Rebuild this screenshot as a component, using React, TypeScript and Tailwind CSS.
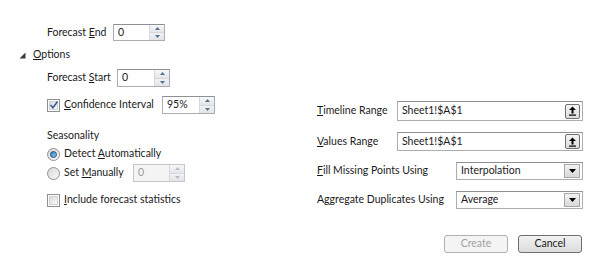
import React from 'react';

// Petits triangles du spinner
const SpinBox: React.FC<{ value: string; width: string; disabled?: boolean }> = ({ value, width, disabled }) => (
  <div
    className={`flex h-full shrink-0 items-stretch border ${
      disabled ? 'border-[#c5c7cb] bg-[#f4f4f4] text-[#9a9a9a]' : 'border-[#abadb3] border-t-[#8e9096] bg-white'
    } ${width}`}
  >
    <div className="flex flex-1 items-center pl-[4px]">{value}</div>
    <div className="flex w-[15px] flex-col border-l border-[#d6d8db]">
      <div className="flex flex-1 items-center justify-center border-b border-[#d6d8db] bg-gradient-to-b from-[#f6f7f8] to-[#e4e6e9]">
        <svg width="5" height="3" viewBox="0 0 5 3">
          <polygon points="2.5,0 5,3 0,3" fill={disabled ? '#b5bcc6' : '#58708f'} />
        </svg>
      </div>
      <div className="flex flex-1 items-center justify-center bg-gradient-to-b from-[#f1f2f4] to-[#e2e4e7]">
        <svg width="5" height="3" viewBox="0 0 5 3">
          <polygon points="0,0 5,0 2.5,3" fill={disabled ? '#b5bcc6' : '#58708f'} />
        </svg>
      </div>
    </div>
  </div>
);

const CheckBox: React.FC<{ checked?: boolean }> = ({ checked }) => (
  <div className="flex h-[13px] w-[13px] shrink-0 items-center justify-center border border-[#8f8f8f] bg-white">
    <div className="relative h-[9px] w-[9px] border border-[#d2d2d2] bg-gradient-to-br from-[#dadada] to-[#fbfbfb]">
      {checked && (
        <svg className="absolute left-[-1px] top-[-2px]" width="10" height="10" viewBox="0 0 10 10">
          <path d="M1.5 5 L4 7.8 L8.5 1.5" fill="none" stroke="#3c5a98" strokeWidth="1.6" />
        </svg>
      )}
    </div>
  </div>
);

const Radio: React.FC<{ checked?: boolean }> = ({ checked }) => (
  <div className="flex h-[13px] w-[13px] shrink-0 items-center justify-center rounded-full border border-[#8f8f8f] bg-gradient-to-br from-[#d6d6d6] to-[#fcfcfc]">
    {checked && (
      <div className="h-[7px] w-[7px] rounded-full border border-[#1c4f7c] bg-gradient-to-br from-[#2b7ab8] to-[#8fd0f2]" />
    )}
  </div>
);

const RangeInput: React.FC<{ value: string }> = ({ value }) => (
  <div className="flex h-full flex-1 items-center border border-[#abadb3] border-t-[#8e9096] bg-white pl-[4px] pr-[2px]">
    <span className="flex-1">{value}</span>
    <div className="flex h-[15px] w-[15px] items-center justify-center rounded-[2px] border border-[#707070] bg-gradient-to-b from-[#f4f4f4] to-[#dcdcdc]">
      <svg width="9" height="10" viewBox="0 0 9 10">
        <path d="M4.5 0.5 L8 4 L5.5 4 L5.5 7.5 L3.5 7.5 L3.5 4 L1 4 Z" fill="#000" />
        <rect x="1" y="8.5" width="7" height="1.2" fill="#000" />
      </svg>
    </div>
  </div>
);

const Select: React.FC<{ value: string }> = ({ value }) => (
  <div className="flex h-full w-[127px] shrink-0 items-center border border-[#abadb3] border-t-[#8e9096] bg-white pl-[4px] pr-[2px]">
    <span className="flex-1">{value}</span>
    <div className="flex h-[14px] w-[16px] items-center justify-center border border-[#a7a7a7] bg-gradient-to-b from-[#f2f2f2] to-[#d9d9d9]">
      <svg width="7" height="4" viewBox="0 0 7 4">
        <polygon points="0,0 7,0 3.5,4" fill="#000" />
      </svg>
    </div>
  </div>
);

export default function App() {
  return (
    <div className="relative h-[265px] w-[600px] overflow-hidden whitespace-nowrap bg-white font-['Lato',sans-serif] text-[10.5px] text-[#1a1a1a]">
      {/* Forecast End */}
      <div className="mt-[24px] flex h-[17px] items-center pl-[47px]">
        <span className="w-[66px] shrink-0">
          Forecast <u>E</u>nd
        </span>
        <SpinBox value="0" width="w-[52px]" />
      </div>

      {/* Options */}
      <div className="mt-[6px] flex h-[16px] items-center pl-[19px]">
        <svg width="7" height="7" viewBox="0 0 7 7">
          <polygon points="6.5,0.5 6.5,6.5 0.5,6.5" fill="#3a3a3a" />
        </svg>
        <span className="ml-[7px]">
          <u>O</u>ptions
        </span>
      </div>

      <div className="flex">
        {/* Colonne gauche */}
        <div className="flex w-[317px] flex-col pl-[47px]">
          <div className="mt-[6px] flex h-[18px] items-center">
            <span className="w-[70px] shrink-0">
              Forecast <u>S</u>tart
            </span>
            <SpinBox value="0" width="w-[53px]" />
          </div>

          <div className="mt-[9px] flex h-[18px] items-center">
            <CheckBox checked />
            <span className="ml-[4px] w-[98px] shrink-0">
              <u>C</u>onfidence Interval
            </span>
            <SpinBox value="95%" width="w-[53px]" />
          </div>

          <div className="mt-[14px] flex h-[16px] items-center">Seasonality</div>

          <div className="mt-[2px] flex h-[16px] items-center">
            <Radio checked />
            <span className="ml-[4px]">
              Detect <u>A</u>utomatically
            </span>
          </div>

          <div className="mt-[2px] flex h-[18px] items-center">
            <Radio />
            <span className="ml-[4px] w-[69px] shrink-0">
              Set <u>M</u>anually
            </span>
            <SpinBox value="0" width="w-[52px]" disabled />
          </div>

          <div className="mt-[10px] flex h-[16px] items-center">
            <CheckBox />
            <span className="ml-[4px]">
              <u>I</u>nclude forecast statistics
            </span>
          </div>
        </div>

        {/* Colonne droite */}
        <div className="flex w-[266px] flex-col">
          <div className="mt-[38px] flex h-[20px] items-center">
            <span className="w-[80px] shrink-0">
              <u>T</u>imeline Range
            </span>
            <RangeInput value="Sheet1!$A$1" />
          </div>

          <div className="mt-[11px] flex h-[19px] items-center">
            <span className="w-[80px] shrink-0">
              <u>V</u>alues Range
            </span>
            <RangeInput value="Sheet1!$A$1" />
          </div>

          <div className="mt-[11px] flex h-[18px] items-center justify-between">
            <span>
              <u>F</u>ill Missing Points Using
            </span>
            <Select value="Interpolation" />
          </div>

          <div className="mt-[11px] flex h-[18px] items-center justify-between">
            <span>
              A<u>g</u>gregate Duplicates Using
            </span>
            <Select value="Average" />
          </div>
        </div>
      </div>

      {/* Boutons */}
      <div className="mt-[26px] flex justify-end gap-[10px] pr-[18px]">
        <button className="h-[18px] w-[64px] rounded-[3px] border border-[#adb2b5] bg-[#f4f4f4] text-[#a0a0a0]">
          Create
        </button>
        <button className="h-[18px] w-[64px] rounded-[3px] border border-[#707070] bg-gradient-to-b from-[#f2f2f2] to-[#dcdcdc]">
          Cancel
        </button>
      </div>
    </div>
  );
}
